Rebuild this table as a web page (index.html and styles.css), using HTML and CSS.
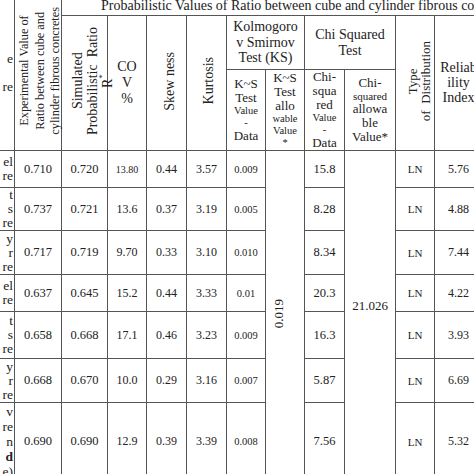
FILE: index.html
```html
<!DOCTYPE html>
<html>
<head>
<meta charset="utf-8">
<link rel="stylesheet" href="styles.css">
</head>
<body>
<div class="sheet">
<table class="t">
  <colgroup>
    <col class="w0"><col class="wa"><col class="wb"><col class="wc"><col class="wd"><col class="we">
    <col class="wf"><col class="wg"><col class="wh"><col class="wi"><col class="wj"><col class="wk">
  </colgroup>
  <tr class="r-title">
    <th rowspan="3" class="c0 c0h">e<br>&nbsp;<br>re</th>
    <th rowspan="3" class="rot ha"><span class="v">Experimental Value of<br>Ratio between cube and<br>cylinder fibrous concretes</span></th>
    <th colspan="10" class="title">Probabilistic Values of Ratio between cube and cylinder fibrous concretes</th>
  </tr>
  <tr class="r-h2">
    <th rowspan="2" class="rot hb"><span class="v">Simulated<br>Probabilistic&nbsp; Ratio<br>R<sup>*</sup></span></th>
    <th rowspan="2" class="hc">CO<br>V<br>%</th>
    <th rowspan="2" class="rot hd"><span class="v">Skew ness</span></th>
    <th rowspan="2" class="rot he"><span class="v">Kurtosis</span></th>
    <th colspan="2" class="grp">Kolmogoro<br>v Smirnov<br>Test (KS)</th>
    <th colspan="2" class="grp">Chi Squared<br>Test</th>
    <th rowspan="2" class="rot hj"><span class="v">Type<br>of&nbsp; Distribution</span></th>
    <th rowspan="2" class="hk">Reliab<br>ility<br>Index</th>
  </tr>
  <tr class="r-h3">
    <th class="sub"><span class="ln">K~S</span><span class="ln">Test</span><span class="ln sm">Value</span><span class="ln sm">-</span><span class="ln">Data</span></th>
    <th class="sub"><span class="ln">K~S</span><span class="ln">Test</span><span class="ln">allo</span><span class="ln sm">wable</span><span class="ln sm">Value</span><span class="ln sm">*</span></th>
    <th class="sub"><span class="ln">Chi-</span><span class="ln">squa</span><span class="ln">red</span><span class="ln sm">Value</span><span class="ln sm">-</span><span class="ln">Data</span></th>
    <th class="sub"><span class="ln">Chi-</span><span class="ln sm2">squared</span><span class="ln">allowa</span><span class="ln">ble</span><span class="ln">Value*</span></th>
  </tr>
  <tr class="r1">
    <td class="c0">el<br>re</td>
    <td class="n">0.710</td><td class="n">0.720</td><td class="n cv small">13.80</td><td class="n d">0.44</td><td class="n e">3.57</td>
    <td class="n ks">0.009</td>
    <td rowspan="7" class="rot span-g"><span class="v">0.019</span></td>
    <td class="n">15.8</td>
    <td rowspan="7" class="n span-i">21.026</td>
    <td class="n ln-c">LN</td><td class="n k">5.76</td>
  </tr>
  <tr class="r2">
    <td class="c0">t<br>s<br>re</td>
    <td class="n">0.737</td><td class="n">0.721</td><td class="n cv">13.6</td><td class="n d">0.37</td><td class="n e">3.19</td>
    <td class="n ks">0.005</td><td class="n">8.28</td><td class="n ln-c">LN</td><td class="n k">4.88</td>
  </tr>
  <tr class="r3">
    <td class="c0">y<br>r<br>re</td>
    <td class="n">0.717</td><td class="n">0.719</td><td class="n cv">9.70</td><td class="n d">0.33</td><td class="n e">3.10</td>
    <td class="n ks">0.010</td><td class="n">8.34</td><td class="n ln-c">LN</td><td class="n k">7.44</td>
  </tr>
  <tr class="r4">
    <td class="c0">el<br>re</td>
    <td class="n">0.637</td><td class="n">0.645</td><td class="n cv">15.2</td><td class="n d">0.44</td><td class="n e">3.33</td>
    <td class="n ks">0.01</td><td class="n">20.3</td><td class="n ln-c">LN</td><td class="n k">4.22</td>
  </tr>
  <tr class="r5">
    <td class="c0">t<br>s<br>re</td>
    <td class="n">0.658</td><td class="n">0.668</td><td class="n cv">17.1</td><td class="n d">0.46</td><td class="n e">3.23</td>
    <td class="n ks">0.009</td><td class="n">16.3</td><td class="n ln-c">LN</td><td class="n k">3.93</td>
  </tr>
  <tr class="r6">
    <td class="c0">y<br>r<br>re</td>
    <td class="n">0.668</td><td class="n">0.670</td><td class="n cv">10.0</td><td class="n d">0.29</td><td class="n e">3.16</td>
    <td class="n ks">0.007</td><td class="n">5.87</td><td class="n ln-c">LN</td><td class="n k">6.69</td>
  </tr>
  <tr class="r7">
    <td class="c0 tall">v<br>re<br>n<br><b>d</b><br>e)</td>
    <td class="n">0.690</td><td class="n">0.690</td><td class="n cv">12.9</td><td class="n d">0.39</td><td class="n e">3.39</td>
    <td class="n ks">0.008</td><td class="n">7.56</td><td class="n ln-c">LN</td><td class="n k">5.32</td>
  </tr>
</table>
</div>
</body>
</html>
```

FILE: styles.css
```css
html, body {
  margin: 0;
  padding: 0;
  background: #ffffff;
  overflow: hidden;
}

.sheet {
  font-family: "Liberation Serif", "Times New Roman", serif;
  color: #222222;
  width: 474px;
  height: 474px;
  overflow: hidden;
}

.t {
  border-collapse: collapse;
  table-layout: fixed;
  width: 498px;
  margin: -5px 0 0 -8px;
}

.w0 { width: 22px; }
.wa { width: 47px; }
.wb { width: 46px; }
.wc { width: 39px; }
.wd { width: 40px; }
.we { width: 40px; }
.wf { width: 39px; }
.wg { width: 39px; }
.wh { width: 40px; }
.wi { width: 51px; }
.wj { width: 39px; }
.wk { width: 56px; }

th,
td {
  border: 1px solid #555555;
  padding: 0;
  text-align: center;
  vertical-align: middle;
  font-weight: normal;
}

.r-title { height: 20px; }
.r-h2 { height: 54px; }
.r-h3 { height: 81px; }
.r1 { height: 37px; }
.r2 { height: 43px; }
.r3 { height: 44px; }
.r4 { height: 37px; }
.r5 { height: 47px; }
.r6 { height: 44px; }
.r7 { height: 78px; }

.title {
  font-size: 14px;
  line-height: 16px;
  text-align: left;
  white-space: nowrap;
  padding-left: 39px;
}

.c0 {
  text-align: right;
  font-size: 13.5px;
  line-height: 14px;
  padding-right: 1px;
  white-space: nowrap;
}

.c0.tall { line-height: 15px; }

.c0h {
  font-size: 13.5px;
  line-height: 14px;
}

.rot .v {
  display: inline-block;
  writing-mode: vertical-rl;
  transform: rotate(180deg);
  text-align: center;
  white-space: nowrap;
}

.ha { padding-left: 2px; }
.ha .v { font-size: 12.3px; line-height: 15.5px; }

.hb { padding-left: 8px; }
.hb .v { font-size: 14px; line-height: 15px; }
.hb sup { font-size: 9px; line-height: 0; }

.hc { font-size: 14px; line-height: 16px; }

.hd { padding-left: 7px; }
.hd .v { font-size: 14px; line-height: 16px; }

.he { padding-left: 4px; }
.he .v { font-size: 14px; line-height: 16px; }

.grp { font-size: 14px; line-height: 15.5px; }

.hj { padding-left: 8px; }
.hj .v { font-size: 13px; line-height: 13px; }

.hk {
  font-size: 14px;
  line-height: 15px;
  padding-right: 8px;
  padding-bottom: 2px;
}

.sub { font-size: 13px; }
.sub .ln { display: block; line-height: 14px; }
.sub .sm { font-size: 10.5px; line-height: 12px; }
.sub .sm2 { font-size: 11px; line-height: 12px; }

.n { font-size: 12.5px; }
.cv { font-size: 12px; }
.cv.small { font-size: 10px; }
.d { font-size: 12px; }
.e { font-size: 12px; }
.ks { font-size: 10.5px; }
.ln-c { font-size: 11px; }
.k { font-size: 12px; padding-right: 8px; }

.span-g { padding-right: 12px; }
.span-g .v { font-size: 13px; }
.span-i { font-size: 13px; padding-bottom: 20px; }
```
